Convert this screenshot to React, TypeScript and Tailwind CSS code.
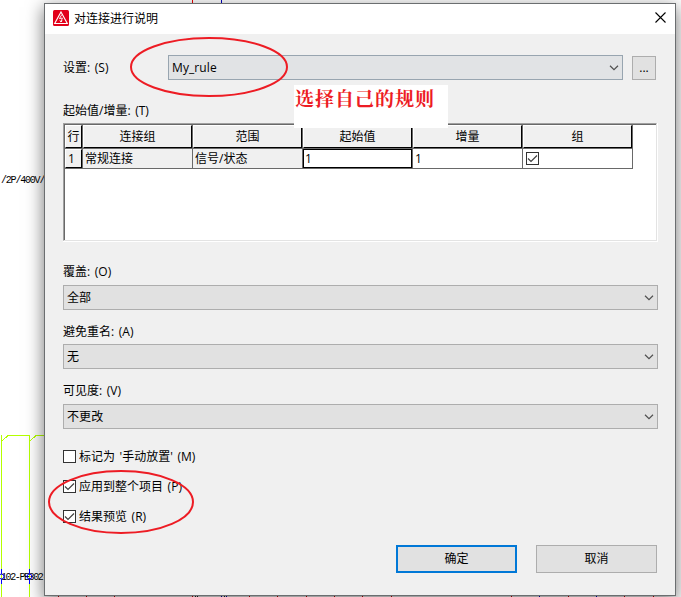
import type { ReactNode } from 'react'
import { clsx } from 'clsx'

const columns = ['连接组', '范围', '起始值', '增量', '组']

const selects = [
  { label: '覆盖: (O)', value: '全部', height: 'h-[59px]', labelHeight: 'h-[21px]' },
  { label: '避免重名: (A)', value: '无', height: 'h-[60px]', labelHeight: 'h-[21px] pt-px' },
  { label: '可见度: (V)', value: '不更改', height: 'h-[46px]', labelHeight: 'h-[21px]' },
]

const options = [
  { label: "标记为 '手动放置' (M)", checked: false },
  { label: '应用到整个项目 (P)', checked: true },
  { label: '结果预览 (R)', checked: true },
]

const bottomTicks = [
  { x: 58, color: '#c00' },
  { x: 86, color: '#c00' },
  { x: 114, color: '#c00' },
  { x: 192, color: '#c00' },
  { x: 195, color: '#222' },
  { x: 197, color: '#222' },
  { x: 221, color: '#00a' },
  { x: 224, color: '#222' },
  { x: 226, color: '#00a' },
  { x: 249, color: '#c00' },
  { x: 277, color: '#c00' },
  { x: 306, color: '#c00' },
  { x: 334, color: '#c00' },
  { x: 362, color: '#c00' },
  { x: 391, color: '#c00' },
  { x: 511, color: '#c00' },
  { x: 539, color: '#00c' },
  { x: 568, color: '#c00' },
  { x: 596, color: '#00c' },
  { x: 624, color: '#c00' },
  { x: 653, color: '#c00' },
]

function Schematic() {
  return (
    <div className="absolute inset-0 text-[10px] leading-none text-black">
      <svg className="absolute inset-0" width="681" height="597" fill="none" shapeRendering="crispEdges">
        <path d="M192.5 0V4" stroke="#f00000" />
        <path d="M221.5 0V4" stroke="#0000c0" />
        <path d="M1.5 435V597M29.5 435V597M8 435.5H30M36 435.5H46" stroke="#b4ff00" />
        <path d="M1.5 441.5L8 435.5M29.5 441.5L36 435.5" stroke="#b4ff00" />
        {bottomTicks.map((t) => (
          <path key={t.x} d={`M${t.x + 0.5} 594V597`} stroke={t.color} />
        ))}
      </svg>
      <span className="absolute left-px top-[176px] whitespace-pre font-['Liberation_Mono','Noto_Sans_CJK_SC',monospace] tracking-[-1.2px]">
        /2P/400V/
      </span>
      <span className="absolute left-px top-[573px] whitespace-pre font-['Liberation_Mono','Noto_Sans_CJK_SC',monospace] tracking-[-1.4px]">
        102-PE302-
      </span>
      <svg className="absolute inset-0" width="681" height="597" fill="none" stroke="#0000ff">
        <path d="M1.5 569V574M1.5 579V584M29.5 569V574M29.5 579V584" />
        <circle cx="1.5" cy="576.5" r="2.5" />
        <circle cx="29.5" cy="576.5" r="2.5" />
      </svg>
    </div>
  )
}

function Chevron() {
  return (
    <svg width="10" height="6" viewBox="0 0 10 6" fill="none" stroke="#505050" strokeWidth="1.2">
      <path d="M1 0.8L5 4.6L9 0.8" />
    </svg>
  )
}

function Select({ value, className }: { value: string; className: string }) {
  return (
    <div className={clsx('flex h-[25px] items-center justify-between border px-[3px]', className)}>
      <span className="tracking-[0.1px]">{value}</span>
      <Chevron />
    </div>
  )
}

function Checkbox({ checked }: { checked: boolean }) {
  return (
    <span className="block h-[13px] w-[13px] shrink-0 border border-[#333] bg-white">
      {checked && (
        <svg width="11" height="11" viewBox="0 0 11 11" fill="none" stroke="#404040" strokeWidth="1.2">
          <path d="M1 5.5L4 8.5L10 2.5" />
        </svg>
      )}
    </span>
  )
}

function HeaderCell({ children }: { children: ReactNode }) {
  return (
    <div className="h-6 border-b border-r border-[#696969]">
      <div className="flex h-[23px] items-center justify-center border border-b-black border-l-white border-r-black border-t-white bg-[#f0f0f0]">
        {children}
      </div>
    </div>
  )
}

function Grid() {
  return (
    <div className="h-[119px] border-b border-r border-white">
      <div className="h-[118px] border border-b-[#e3e3e3] border-l-[#a0a0a0] border-r-[#e3e3e3] border-t-[#a0a0a0]">
        <div className="h-[116px] border-l border-t border-[#696969] bg-white">
          <div className="grid w-[568px] grid-cols-[18px_repeat(5,110px)]">
            <HeaderCell>行</HeaderCell>
            {columns.map((name) => (
              <HeaderCell key={name}>
                <span className={clsx(name === '起始值' && 'pt-px')}>{name}</span>
              </HeaderCell>
            ))}
            <div className="h-5 border-b border-r border-[#696969]">
              <div className="flex h-[19px] items-center border border-b-black border-l-white border-r-black border-t-white bg-[#f0f0f0] pl-0.5">
                1
              </div>
            </div>
            <div className="flex h-5 items-center border-b border-r border-[#696969] bg-[#f0f0f0] pl-0.5">常规连接</div>
            <div className="flex h-5 items-center border-b border-r border-[#696969] bg-[#f0f0f0] pl-0.5">信号/状态</div>
            <div className="h-5 border-b border-r border-[#696969]">
              <div className="flex h-[19px] items-center border border-black pl-px">1</div>
            </div>
            <div className="flex h-5 items-center border-b border-r border-[#696969] pl-0.5">1</div>
            <div className="flex h-5 items-center border-b border-r border-[#696969] pl-[3px]">
              <Checkbox checked />
            </div>
          </div>
        </div>
      </div>
    </div>
  )
}

export default function App() {
  return (
    <div className="relative h-[597px] w-[681px] overflow-hidden bg-white font-['Open_Sans','Noto_Sans_CJK_SC',sans-serif] text-[12px] leading-4 text-black">
      <Schematic />

      {/* Dialog */}
      <div className="absolute left-11 top-[3px] flex h-[593px] w-[632px] flex-col border border-[#6b6e70] bg-[#f0f0f0] shadow-[0_5px_16px_1px_rgba(0,0,0,0.5)] [word-spacing:1.5px]">
        <header className="flex h-[30px] shrink-0 items-center bg-white pl-2 pr-[9px]">
          <svg width="16" height="16" viewBox="0 0 16 16" fill="none" className="mb-0.5">
            <rect width="16" height="16" rx="1.5" fill="#e2001a" />
            <path d="M8 2L14.3 13.5H1.7Z" stroke="#fff" strokeWidth="1.1" />
            <path d="M8.8 4.6L6.4 8.6L9.4 8L7.9 12M6.9 10.4L7.9 12L9.3 10.8" stroke="#fff" strokeWidth="0.9" />
          </svg>
          <span className="ml-[5px] flex-1">对连接进行说明</span>
          <svg width="11" height="11" viewBox="0 0 11 11" stroke="#000" strokeWidth="1.1" className="mb-[3px]">
            <path d="M0.5 0.5L10.5 10.5M10.5 0.5L0.5 10.5" />
          </svg>
        </header>

        <div className="flex flex-col pl-[18px] pr-[17px] pt-[21px]">
          <div className="flex h-[25px] items-center">
            <span className="w-[105px]">设置: (S)</span>
            <Select value="My_rule" className="w-[455px] border-[#98a5b0] bg-[#e1e3e5]" />
            <button className="ml-[9px] mt-px h-6 w-6 border border-[#adadad] bg-[#e1e1e1] leading-5">...</button>
          </div>

          <div className="mt-[23px] h-5">起始值/增量: (T)</div>
          <Grid />

          <div className="mt-[22px]">
            {selects.map((s) => (
              <div key={s.label} className={s.height}>
                <div className={s.labelHeight}>{s.label}</div>
                <Select value={s.value} className="border-[#adadad] bg-[#e1e1e1]" />
              </div>
            ))}
          </div>

          <div className="mt-[19px] flex flex-col gap-3.5">
            {options.map((o) => (
              <label key={o.label} className="flex h-4 items-center gap-[3px]">
                <Checkbox checked={o.checked} />
                <span className="pt-0.5">{o.label}</span>
              </label>
            ))}
          </div>

          <div className="mt-[21px] flex justify-end gap-[19px] pr-px">
            <button className="h-7 w-[121px] border-2 border-[#0078d7] bg-[#e1e1e1]">确定</button>
            <button className="h-7 w-[121px] border border-[#adadad] bg-[#e1e1e1]">取消</button>
          </div>
        </div>
      </div>

      {/* Red pen notes */}
      <div className="absolute left-[294px] top-[85px] h-[43px] w-[154px] whitespace-nowrap bg-white pl-px pt-[3px] font-['Noto_Serif_CJK_SC','Noto_Sans_CJK_SC',serif] text-[19px] font-bold leading-5 tracking-[1px] text-[#ed1c24]">
        选择自己的规则
      </div>
      <svg className="absolute inset-0" width="681" height="597" fill="none" stroke="#ed1c24" strokeWidth="2">
        <ellipse cx="209" cy="67" rx="78" ry="29" />
        <ellipse cx="121" cy="502" rx="72" ry="31" />
      </svg>
    </div>
  )
}
